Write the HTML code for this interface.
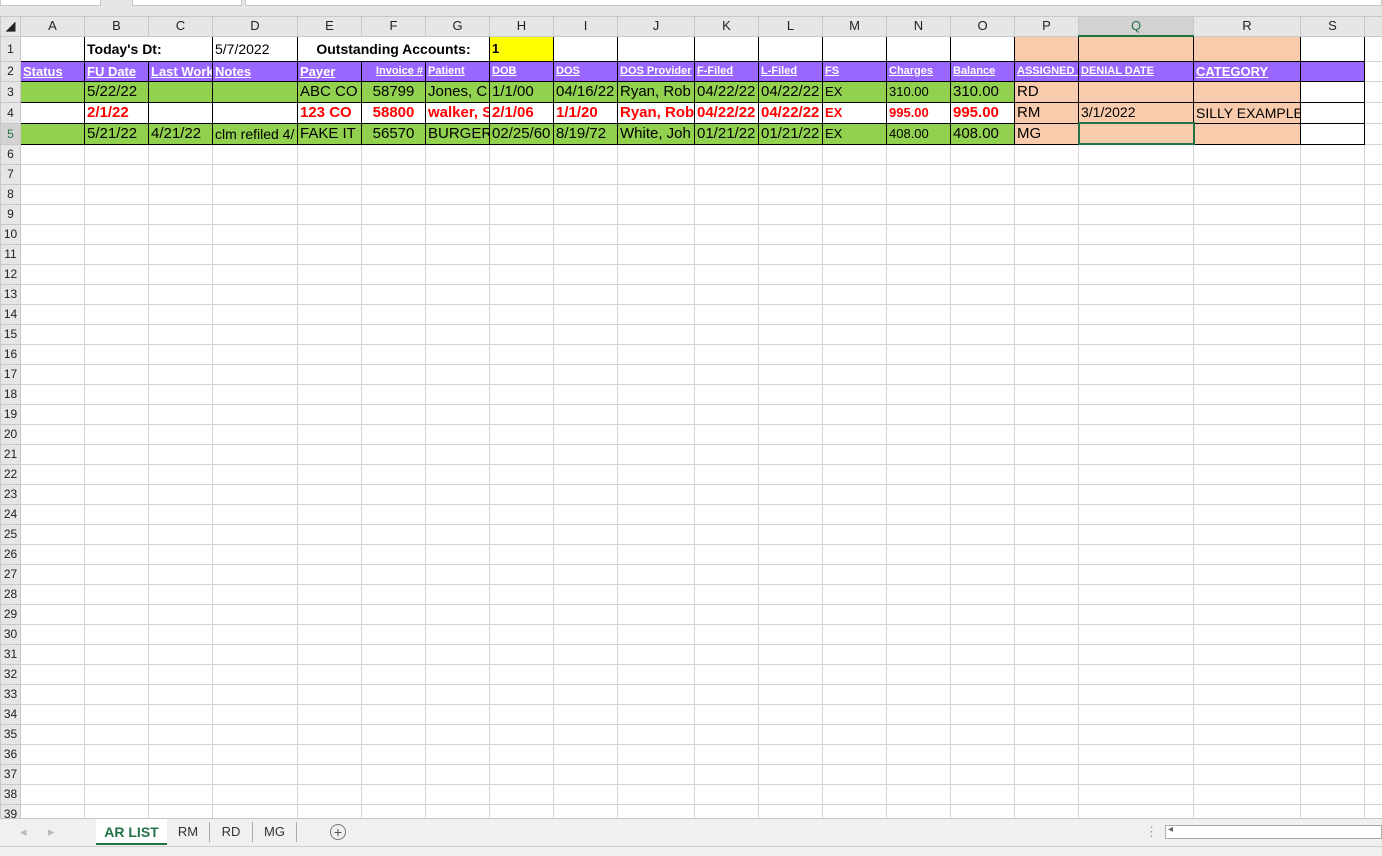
<!DOCTYPE html>
<html><head><style>
*{margin:0;padding:0;box-sizing:border-box}
body{width:1382px;height:856px;overflow:hidden;background:#fff;font-family:"Liberation Sans",Arial,sans-serif;position:relative}
.top{position:absolute;left:0;top:0;width:1382px;height:16px;background:#e6e6e6}
.top div{position:absolute;top:0;height:6px;background:#fff;border:1px solid #c6c6c6;border-top:none}
table{position:absolute;left:0;top:16px;border-collapse:collapse;table-layout:fixed;width:1428px}
td{border:1px solid #d4d4d4;overflow:hidden;white-space:nowrap;font-size:15px;padding:0 2px;height:20px;line-height:18px}
tr.h td{background:#e6e6e6;text-align:center;font-size:13px;color:#222;height:19px;border-color:#c8c8c8}
td.rh{background:#e6e6e6;text-align:center;font-size:12px;color:#222;padding:0;border-color:#c8c8c8}
.b td.c{border:1px solid #000}
.g{background:#92d050}.p{background:#9966ff;color:#fff;font-weight:bold;text-decoration:underline;font-size:11px;vertical-align:top}
.o{background:#f8cbad}.y{background:#ffff00}
.r{color:#f00;font-weight:bold}
.tabs{position:absolute;left:0;top:818px;width:1382px;height:28px;background:#f0f0f0;border-top:1px solid #c6c6c6}
.status{position:absolute;left:0;top:846px;width:1382px;height:10px;background:#f0f0f0;border-top:1px solid #d0d0d0}
.tab{position:absolute;top:0;height:26px;font-size:13px;line-height:26px;color:#333}
</style></head><body>
<div class="top"><div style="left:0;width:101px"></div><div style="left:132px;width:110px"></div><div style="left:245px;width:1137px"></div></div>
<table>
<colgroup><col style="width:20px"><col style="width:64px"><col style="width:64px"><col style="width:64px"><col style="width:85px"><col style="width:64px"><col style="width:64px"><col style="width:64px"><col style="width:64px"><col style="width:64px"><col style="width:77px"><col style="width:64px"><col style="width:64px"><col style="width:64px"><col style="width:64px"><col style="width:64px"><col style="width:64px"><col style="width:115px"><col style="width:107px"><col style="width:64px"><col style="width:64px"></colgroup>
<tr class="h"><td>◢</td><td>A</td><td>B</td><td>C</td><td>D</td><td>E</td><td>F</td><td>G</td><td>H</td><td>I</td><td>J</td><td>K</td><td>L</td><td>M</td><td>N</td><td>O</td><td>P</td><td style="background:#d2d2d2;color:#217346;border-bottom:2px solid #217346">Q</td><td>R</td><td>S</td><td></td></tr>
<tr class="b" style="height:25px"><td class="rh">1</td><td class="c"></td><td class="c" colspan="2" style="font-weight:bold;font-size:14px">Today's Dt:</td><td class="c" style="font-size:14px">5/7/2022</td><td class="c" colspan="3" style="font-weight:bold;font-size:14px;text-align:center">Outstanding Accounts:</td><td class="c y" style="font-weight:bold;font-size:13px">1</td><td class="c"></td><td class="c"></td><td class="c"></td><td class="c"></td><td class="c"></td><td class="c"></td><td class="c"></td><td class="c o"></td><td class="c o"></td><td class="c o"></td><td class="c"></td><td></td></tr>
<tr class="b"><td class="rh">2</td><td class="c p" style="vertical-align:bottom;font-size:13px">Status</td><td class="c p" style="vertical-align:bottom;font-size:13px">FU Date</td><td class="c p" style="vertical-align:bottom;font-size:13px">Last Work</td><td class="c p" style="vertical-align:bottom;font-size:13px">Notes</td><td class="c p" style="vertical-align:bottom;font-size:13px">Payer</td><td class="c p" style="text-align:right">Invoice #</td><td class="c p">Patient</td><td class="c p">DOB</td><td class="c p">DOS</td><td class="c p">DOS Provider</td><td class="c p">F-Filed</td><td class="c p">L-Filed</td><td class="c p">FS</td><td class="c p">Charges</td><td class="c p">Balance</td><td class="c p">ASSIGNED T</td><td class="c p">DENIAL DATE</td><td class="c p" style="vertical-align:bottom;font-size:13px">CATEGORY</td><td class="c p"></td><td></td></tr>
<tr class="b" style="height:21px"><td class="rh">3</td><td class="c g"></td><td class="c g">5/22/22</td><td class="c g"></td><td class="c g"></td><td class="c g">ABC CO</td><td class="c g" style="text-align:center">58799</td><td class="c g">Jones, C</td><td class="c g">1/1/00</td><td class="c g">04/16/22</td><td class="c g">Ryan, Rob</td><td class="c g">04/22/22</td><td class="c g">04/22/22</td><td class="c g" style="font-size:13px">EX</td><td class="c g" style="font-size:13px">310.00</td><td class="c g">310.00</td><td class="c o">RD</td><td class="c o"></td><td class="c o"></td><td class="c"></td><td></td></tr>
<tr class="b" style="height:21px"><td class="rh">4</td><td class="c"></td><td class="c r">2/1/22</td><td class="c"></td><td class="c"></td><td class="c r">123 CO</td><td class="c r" style="text-align:center">58800</td><td class="c r">walker, S</td><td class="c r">2/1/06</td><td class="c r">1/1/20</td><td class="c r">Ryan, Rob</td><td class="c r">04/22/22</td><td class="c r">04/22/22</td><td class="c r" style="font-size:13px">EX</td><td class="c r" style="font-size:13px">995.00</td><td class="c r">995.00</td><td class="c o">RM</td><td class="c o" style="font-size:14px">3/1/2022</td><td class="c o" style="font-size:14px">SILLY EXAMPLE</td><td class="c"></td><td></td></tr>
<tr class="b" style="height:21px"><td class="rh" style="color:#217346;background:#d2d2d2">5</td><td class="c g"></td><td class="c g">5/21/22</td><td class="c g">4/21/22</td><td class="c g" style="font-size:14px">clm refiled 4/</td><td class="c g">FAKE IT</td><td class="c g" style="text-align:center">56570</td><td class="c g">BURGER</td><td class="c g">02/25/60</td><td class="c g">8/19/72</td><td class="c g">White, Joh</td><td class="c g">01/21/22</td><td class="c g">01/21/22</td><td class="c g" style="font-size:13px">EX</td><td class="c g" style="font-size:13px">408.00</td><td class="c g">408.00</td><td class="c o">MG</td><td class="c o" style="border:2px solid #217346"></td><td class="c o"></td><td class="c"></td><td></td></tr>
<tr><td class="rh">6</td><td></td><td></td><td></td><td></td><td></td><td></td><td></td><td></td><td></td><td></td><td></td><td></td><td></td><td></td><td></td><td></td><td></td><td></td><td></td><td></td></tr>
</table>
<script>
var t=document.querySelector('table');
for(var i=7;i<=39;i++){var tr=document.createElement('tr');var s='<td class="rh">'+i+'</td>';for(var j=0;j<20;j++)s+='<td></td>';tr.innerHTML=s;t.appendChild(tr);}
</script>
<div class="tabs">
<span class="tab" style="left:20px;color:#bbb">◂</span><span class="tab" style="left:48px;color:#bbb">▸</span>
<div class="tab" style="left:96px;width:71px;background:#fff;border-bottom:2px solid #217346;color:#217346;font-weight:bold;text-align:center;font-size:14px">AR LIST</div>
<div class="tab" style="left:167px;width:43px;text-align:center;border-right:1px solid #aaa;height:20px;top:3px;line-height:20px">RM</div>
<div class="tab" style="left:210px;width:43px;text-align:center;border-right:1px solid #aaa;height:20px;top:3px;line-height:20px">RD</div>
<div class="tab" style="left:253px;width:44px;text-align:center;border-right:1px solid #aaa;height:20px;top:3px;line-height:20px">MG</div>
<div class="tab" style="left:330px;top:5px;width:16px;height:16px;border:1px solid #777;border-radius:50%;text-align:center;line-height:14px;font-size:14px;color:#555">+</div>
<span class="tab" style="left:1145px;color:#999">⋮</span>
<div style="position:absolute;left:1165px;top:6px;width:217px;height:14px;background:#fff;border:1px solid #aaa"><span style="position:absolute;left:2px;top:-2px;font-size:10px;color:#666">◂</span></div>
</div>
<div class="status"></div>
</body></html>
